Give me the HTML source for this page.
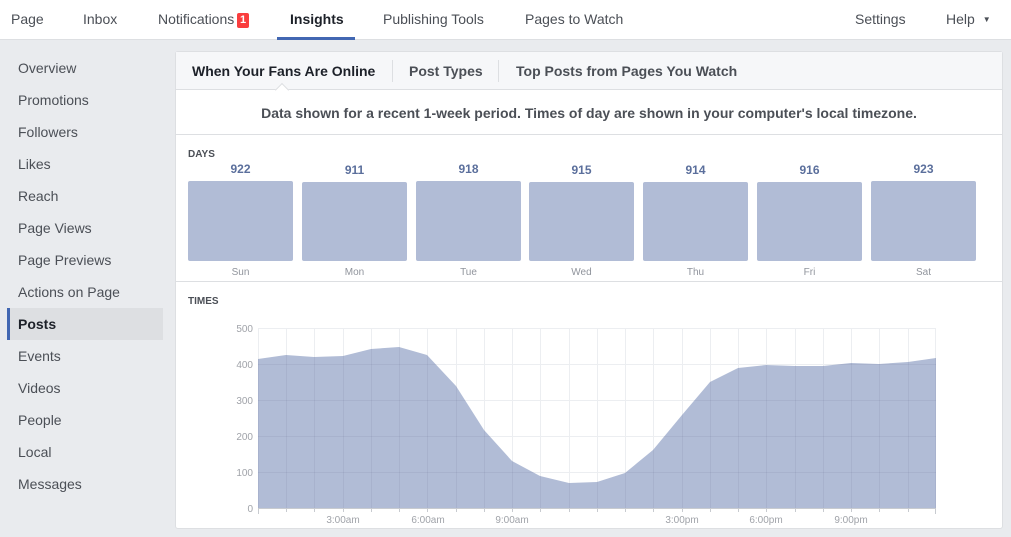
<!DOCTYPE html><html><head><style>
*{margin:0;padding:0;box-sizing:border-box}
body{width:1011px;height:537px;background:#e9ebee;font-family:"Liberation Sans",Arial,sans-serif;position:relative;overflow:hidden;color:#4b4f56}
.a{position:absolute;white-space:nowrap}
#nav{position:absolute;left:0;top:0;width:1011px;height:40px;background:#fff;border-bottom:1px solid #dddfe2}
#nav .a{top:11px;font-size:14px;color:#4b4f56}
.side{left:18px;font-size:14px;color:#4b4f56}
#panel{position:absolute;left:175px;top:51px;width:828px;height:478px;background:#fff;border:1px solid #dddfe2;border-radius:3px}
.bar{position:absolute;top:181px;width:105px;height:80px;background:#b1bcd6;border-radius:2px}
.num{font-size:12px;font-weight:bold;color:#5b6f9c;top:162px;text-align:center;width:105px}
.day{font-size:10px;color:#90949c;top:267px;text-align:center;width:105px}
</style></head><body>
<div id="nav">
<div class="a" style="left:11px">Page</div>
<div class="a" style="left:83px">Inbox</div>
<div class="a" style="left:158px">Notifications</div>
<div class="a" style="left:237px;top:13px;width:12px;height:15px;background:#fa3e3e;color:#fff;font-size:11px;font-weight:bold;text-align:center;line-height:15px;border-radius:2px">1</div>
<div class="a" style="left:290px;font-weight:bold;color:#1d2129">Insights</div>
<div class="a" style="left:277px;top:37px;width:78px;height:3px;background:#4267b2"></div>
<div class="a" style="left:383px">Publishing Tools</div>
<div class="a" style="left:525px">Pages to Watch</div>
<div class="a" style="left:855px">Settings</div>
<div class="a" style="left:946px">Help <span style="font-size:8px;position:relative;top:-2px;margin-left:4px">▼</span></div>
</div>
<div class="a" style="left:7px;top:308px;width:156px;height:32px;background:#dddfe2;border-left:3px solid #4267b2"></div>
<div class="a side" style="top:60px">Overview</div>
<div class="a side" style="top:92px">Promotions</div>
<div class="a side" style="top:124px">Followers</div>
<div class="a side" style="top:156px">Likes</div>
<div class="a side" style="top:188px">Reach</div>
<div class="a side" style="top:220px">Page Views</div>
<div class="a side" style="top:252px">Page Previews</div>
<div class="a side" style="top:284px">Actions on Page</div>
<div class="a side" style="top:316px;font-weight:bold;color:#1d2129">Posts</div>
<div class="a side" style="top:348px">Events</div>
<div class="a side" style="top:380px">Videos</div>
<div class="a side" style="top:412px">People</div>
<div class="a side" style="top:444px">Local</div>
<div class="a side" style="top:476px">Messages</div>
<div id="panel"></div>
<div class="a" style="left:176px;top:52px;width:826px;height:38px;background:#f6f7f9;border-bottom:1px solid #dddfe2"></div>
<div class="a" style="left:192px;top:63px;font-size:14px;font-weight:bold;color:#1d2129">When Your Fans Are Online</div>
<div class="a" style="left:392px;top:60px;width:1px;height:22px;background:#dddfe2"></div>
<div class="a" style="left:409px;top:63px;font-size:14px;font-weight:bold;color:#4b4f56">Post Types</div>
<div class="a" style="left:498px;top:60px;width:1px;height:22px;background:#dddfe2"></div>
<div class="a" style="left:516px;top:63px;font-size:14px;font-weight:bold;color:#4b4f56">Top Posts from Pages You Watch</div>
<div class="a" style="left:277px;top:85px;width:10px;height:10px;background:#fff;border-left:1px solid #dddfe2;border-top:1px solid #dddfe2;transform:rotate(45deg)"></div>
<div class="a" style="left:176px;top:105px;width:826px;text-align:center;font-size:14px;font-weight:bold;color:#4b4f56">Data shown for a recent 1-week period. Times of day are shown in your computer's local timezone.</div>
<div class="a" style="left:176px;top:134px;width:826px;height:1px;background:#dddfe2"></div>
<div class="a" style="left:188px;top:149px;font-size:10px;font-weight:bold;color:#4b4f56">DAYS</div>
<div class="bar" style="left:188px;top:181px;height:80px"></div><div class="a num" style="left:188px">922</div><div class="a day" style="left:188px">Sun</div>
<div class="bar" style="left:302px;top:182px;height:79px"></div><div class="a num" style="left:302px;top:163px">911</div><div class="a day" style="left:302px">Mon</div>
<div class="bar" style="left:416px;top:181px;height:80px"></div><div class="a num" style="left:416px">918</div><div class="a day" style="left:416px">Tue</div>
<div class="bar" style="left:529px;top:182px;height:79px"></div><div class="a num" style="left:529px;top:163px">915</div><div class="a day" style="left:529px">Wed</div>
<div class="bar" style="left:643px;top:182px;height:79px"></div><div class="a num" style="left:643px;top:163px">914</div><div class="a day" style="left:643px">Thu</div>
<div class="bar" style="left:757px;top:182px;height:79px"></div><div class="a num" style="left:757px;top:163px">916</div><div class="a day" style="left:757px">Fri</div>
<div class="bar" style="left:871px;top:181px;height:80px"></div><div class="a num" style="left:871px">923</div><div class="a day" style="left:871px">Sat</div>
<div class="a" style="left:176px;top:281px;width:826px;height:1px;background:#dddfe2"></div>
<div class="a" style="left:188px;top:296px;font-size:10px;font-weight:bold;color:#4b4f56">TIMES</div>
<svg class="a" style="left:0;top:0" width="1011" height="537" font-family="Liberation Sans,Arial,sans-serif" font-size="10" fill="#a0a3a9">
<defs><g id="grid">
<path d="M258 328.5H936M258 364.5H936M258 400.5H936M258 436.5H936M258 472.5H936"/>
<path d="M258.5 328V508M286.5 328V508M314.5 328V508M343.5 328V508M371.5 328V508M399.5 328V508M427.5 328V508M456.5 328V508M484.5 328V508M512.5 328V508M540.5 328V508M569.5 328V508M597.5 328V508M625.5 328V508M653.5 328V508M682.5 328V508M710.5 328V508M738.5 328V508M766.5 328V508M795.5 328V508M823.5 328V508M851.5 328V508M879.5 328V508M908.5 328V508M935.5 328V508"/>
</g>
<clipPath id="ar"><path id="area" d="M258 359L286 355L314 357L343 356L371 349L399 347L427 355L456 386L484 430L512 461L540 476L569 483L597 482L625 473L653 450L682 415L710 382L738 368L766 365L795 366L823 366L851 363L879 364L908 362L936 358V508H258Z"/></clipPath></defs>
<use href="#grid" stroke="#eceef1"/>
<use href="#area" fill="#b1bcd6"/>
<g clip-path="url(#ar)"><use href="#grid" stroke="rgba(90,100,130,0.1)"/></g>
<g stroke="#c8cbd0"><path d="M258 508.5H936"/><path d="M258.5 508V514M286.5 508V512M314.5 508V512M343.5 508V512M371.5 508V512M399.5 508V512M427.5 508V512M456.5 508V512M484.5 508V512M512.5 508V512M540.5 508V512M569.5 508V512M597.5 508V512M625.5 508V512M653.5 508V512M682.5 508V512M710.5 508V512M738.5 508V512M766.5 508V512M795.5 508V512M823.5 508V512M851.5 508V512M879.5 508V512M908.5 508V512M935.5 508V514"/></g>
<g text-anchor="end"><text x="253" y="332">500</text><text x="253" y="368">400</text><text x="253" y="404">300</text><text x="253" y="440">200</text><text x="253" y="476">100</text><text x="253" y="512">0</text></g>
<g text-anchor="middle"><text x="343" y="523">3:00am</text><text x="428" y="523">6:00am</text><text x="512" y="523">9:00am</text><text x="682" y="523">3:00pm</text><text x="766" y="523">6:00pm</text><text x="851" y="523">9:00pm</text></g>
</svg>
</body></html>
